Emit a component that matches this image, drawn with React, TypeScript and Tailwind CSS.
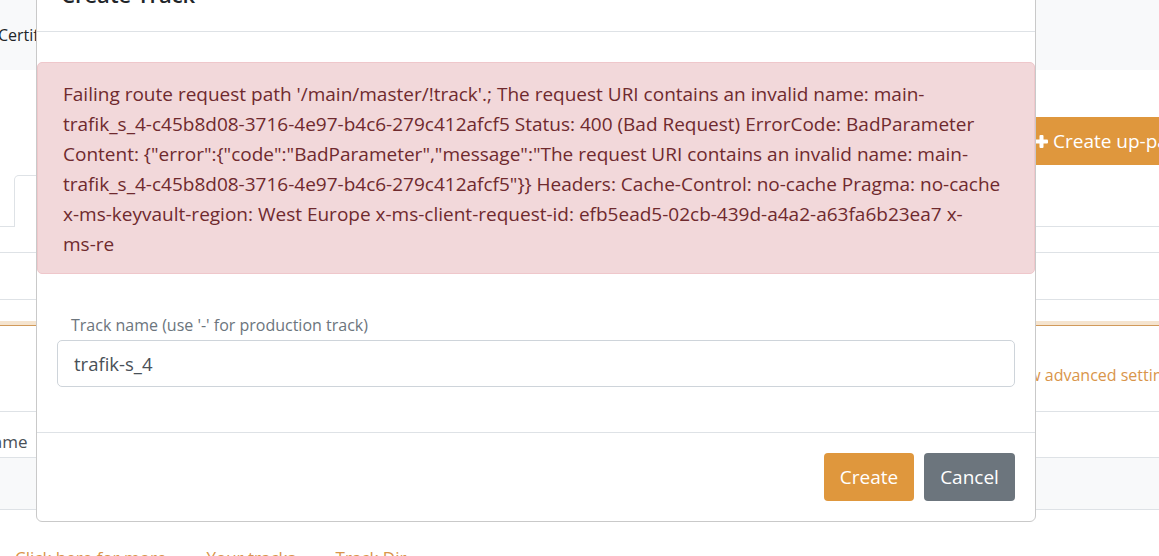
import React from "react";

const lines = [
  "Failing route request path '/main/master/!track'.; The request URI contains an invalid name: main-",
  "trafik_s_4-c45b8d08-3716-4e97-b4c6-279c412afcf5 Status: 400 (Bad Request) ErrorCode: BadParameter",
  'Content: {"error":{"code":"BadParameter","message":"The request URI contains an invalid name: main-',
  'trafik_s_4-c45b8d08-3716-4e97-b4c6-279c412afcf5"}} Headers: Cache-Control: no-cache Pragma: no-cache',
  "x-ms-keyvault-region: West Europe x-ms-client-request-id: efb5ead5-02cb-439d-a4a2-a63fa6b23ea7 x-",
  "ms-re",
];

function Plus() {
  return (
    <svg width="13" height="13" viewBox="0 0 13 13" className="shrink-0">
      <rect x="4.5" y="0" width="4" height="13" rx="1" fill="white" />
      <rect x="0" y="4.5" width="13" height="4" rx="1" fill="white" />
    </svg>
  );
}

export default function App() {
  return (
    <div className="relative w-[1159px] h-[556px] overflow-hidden bg-white font-['Open_Sans','Noto_Sans',sans-serif] text-[#212529]">
      {/* Background page */}
      <div className="h-[70px] bg-[#f8f9fa] flex items-center">
        <span className="-ml-[2px] text-[16px] whitespace-nowrap">Certificates</span>
      </div>
      <div className="h-[47px]" />
      <div className="flex h-[48px]">
        <div className="ml-[1019px] h-[48px] bg-[#df973d] rounded-[4px] flex items-center gap-[5px] pl-[16px] pr-[16px] text-white text-[19px] whitespace-nowrap">
          <Plus />
          <span>Create up-path</span>
        </div>
      </div>
      <div className="h-[10px]" />
      <div className="h-[52px] border-b border-[#dee2e6] flex items-end">
        <div className="ml-[14px] w-[900px] h-[52px] -mb-px border border-b-0 border-[#dee2e6] rounded-t-[5px] bg-white" />
      </div>
      <div className="h-[26px] border-b border-[#dee2e6]" />
      <div className="h-[47px] border-b border-[#dee2e6]" />
      <div className="h-[21px]" />
      <div className="h-[4px] bg-[#f5e4cf]" />
      <div className="h-[1px] bg-[#d19a5a]" />
      <div className="h-[85px] flex items-center pt-[12px]">
        <span className="ml-[1000px] text-[16px] text-[#d9954a] whitespace-nowrap">Show advanced settings</span>
      </div>
      <div className="h-[47px] border-t border-b border-[#dee2e6] flex items-end pb-[3px]">
        <span className="-ml-[20px] text-[17px] text-[#495057]">Name</span>
      </div>
      <div className="h-[52px] bg-[#f8f9fa] border-b border-[#dee2e6]" />
      <div className="pt-[35px] pl-[15px] flex gap-[40px] text-[17px] text-[#d9954a] whitespace-nowrap">
        <span>Click here for more</span>
        <span>Your tracks</span>
        <span>Track Dir</span>
      </div>

      {/* Modal */}
      <div className="absolute left-[36px] top-[-41px] w-[1000px] bg-white border border-[#c9c9c9] rounded-[6px]">
        <div className="h-[72px] border-b border-[#dee2e6] px-[24px] pt-[19px]">
          <h5 className="text-[22px] leading-[30px] font-semibold text-[#212529]">Create Track</h5>
        </div>
        <div className="pt-[30px]">
          <div className="bg-[#f2d8da] border border-[#efc7cb] rounded-[5px] px-[25px] pt-[16px] pb-[14px] text-[#6f2a2e] text-[19px] leading-[30px]">
            {lines.map((l, i) => (
              <div key={i} className="whitespace-nowrap">{l}</div>
            ))}
          </div>
          <div className="px-[20px] pt-[39px] pb-[45px]">
            <label className="block pl-[14px] text-[16px] leading-[24px] text-[#6c757d] mb-[3px]">
              Track name (use '-' for production track)
            </label>
            <div className="h-[47px] border border-[#ced4da] rounded-[5px] flex items-center px-[16px] text-[18.5px] text-[#495057]">
              trafik-s_4
            </div>
          </div>
        </div>
        <div className="border-t border-[#dee2e6] p-[20px] flex justify-end gap-[10px]">
          <button className="w-[90px] h-[48px] rounded-[4px] bg-[#df973d] text-white text-[19px]">Create</button>
          <button className="w-[91px] h-[48px] rounded-[4px] bg-[#6c757d] text-white text-[19px]">Cancel</button>
        </div>
      </div>
    </div>
  );
}
